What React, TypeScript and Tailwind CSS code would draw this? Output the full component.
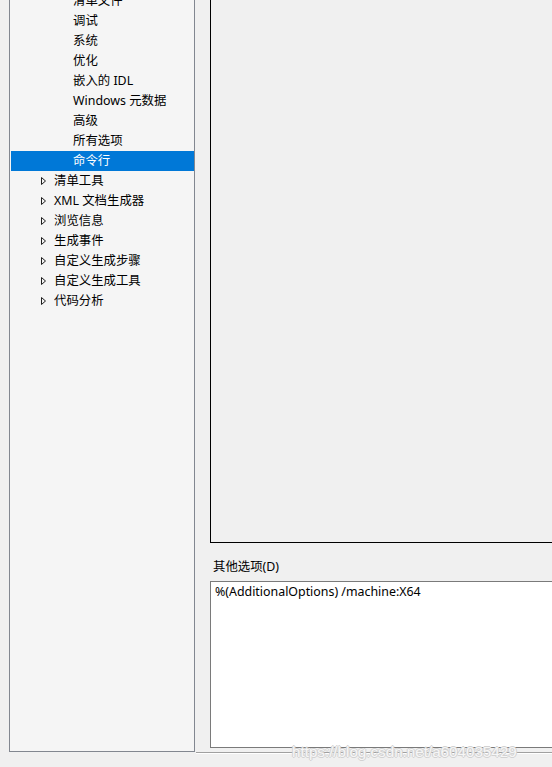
const font = { fontFamily: '"Noto Sans", "Noto Sans CJK SC", sans-serif' };

const subItems = [
  "清单文件",
  "调试",
  "系统",
  "优化",
  "嵌入的 IDL",
  "Windows 元数据",
  "高级",
  "所有选项",
];

const groups = [
  "清单工具",
  "XML 文档生成器",
  "浏览信息",
  "生成事件",
  "自定义生成步骤",
  "自定义生成工具",
  "代码分析",
];

const Caret = () => (
  <svg width="5" height="8" viewBox="0 0 5 8" className="shrink-0">
    <path d="M0.5 0.5 L4.5 4 L0.5 7.5 Z" fill="none" stroke="#1e1e1e" strokeWidth="1" />
  </svg>
);

export default function App() {
  return (
    <div
      className="relative flex w-[552px] h-[767px] overflow-hidden bg-[#f0f0f0] text-[12.4px] text-black"
      style={font}
    >
      {/* property tree */}
      <div className="pl-[9px] shrink-0">
        <div className="w-[186px] h-[752px] overflow-hidden border-x border-b border-[#828790] bg-[#f5f5f5]">
          <ul className="-mt-[9px]">
            {subItems.map((t) => (
              <li key={t} className="h-[20px] flex items-center pl-[63px] whitespace-nowrap">
                {t}
              </li>
            ))}
            <li className="h-[20px] ml-[1px] flex items-center pl-[62px] bg-[#0078d7] text-white">
              命令行
            </li>
            {groups.map((t) => (
              <li key={t} className="h-[20px] flex items-center gap-[8px] pl-[31px] whitespace-nowrap">
                <Caret />
                <span>{t}</span>
              </li>
            ))}
          </ul>
        </div>
      </div>

      {/* right side */}
      <div className="flex-1 flex flex-col">
        <div className="ml-[15px] w-[400px] h-[543px] shrink-0 border-l border-b border-black bg-[#f0f0f0]" />
        <div className="ml-[18px] mt-[14px] h-[20px] leading-[20px] whitespace-nowrap">其他选项(D)</div>
        <div className="ml-[15px] mt-[4px] w-[400px] h-[167px] shrink-0 border-l border-y border-[#7a7a7a] bg-white pl-[4px] pt-[2px] leading-[16px] whitespace-nowrap">
          %(AdditionalOptions) /machine:X64
        </div>
        <div className="ml-[1px] mt-[4px] w-[400px] h-[2px] border-t border-[#a0a0a0] border-b border-b-white" />
      </div>

      {/* watermark */}
      <div
        className="absolute left-[292px] top-[742px] text-[15.2px] leading-[20px] text-[#f6f6f6] whitespace-nowrap"
        style={{
          fontFamily: '"Liberation Sans", Arial, sans-serif',
          textShadow: "1px 0 0 #d2d2d2, -1px 0 0 #d2d2d2, 0 1px 0 #d2d2d2, 0 -1px 0 #d2d2d2",
        }}
      >
        https://blog.csdn.net/a604035429
      </div>
    </div>
  );
}
